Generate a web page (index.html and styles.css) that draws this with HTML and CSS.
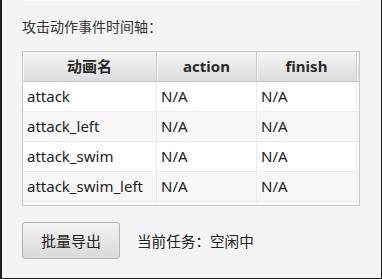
FILE: index.html
```html
<!DOCTYPE html>
<html lang="zh-CN">
<head>
    <meta charset="UTF-8">
    <title>攻击动作事件时间轴</title>
    <link rel="stylesheet" href="styles.css">
</head>
<body>
    <div class="frame">
        <div class="top-edge"></div>
        <div class="title">攻击动作事件时间轴：</div>

        <div class="grid">
            <div class="grid-head">
                <div class="cell">动画名</div>
                <div class="cell">action</div>
                <div class="cell">finish</div>
                <div class="cell filler"></div>
            </div>
            <div class="grid-body">
                <div class="row">
                    <div class="cell">attack</div>
                    <div class="cell">N/A</div>
                    <div class="cell">N/A</div>
                    <div class="cell filler"></div>
                </div>
                <div class="row">
                    <div class="cell">attack_left</div>
                    <div class="cell">N/A</div>
                    <div class="cell">N/A</div>
                    <div class="cell filler"></div>
                </div>
                <div class="row">
                    <div class="cell">attack_swim</div>
                    <div class="cell">N/A</div>
                    <div class="cell">N/A</div>
                    <div class="cell filler"></div>
                </div>
                <div class="row">
                    <div class="cell">attack_swim_left</div>
                    <div class="cell">N/A</div>
                    <div class="cell">N/A</div>
                    <div class="cell filler"></div>
                </div>
                <div class="row">
                    <div class="cell"></div>
                    <div class="cell"></div>
                    <div class="cell"></div>
                    <div class="cell filler"></div>
                </div>
            </div>
        </div>

        <div class="footer">
            <button class="export-btn">批量导出</button>
            <span class="status">当前任务：空闲中</span>
        </div>
    </div>
</body>
</html>
```

FILE: styles.css
```css
body {
    margin: 0;
    font-family: 'Noto Sans', 'Noto Sans CJK SC', sans-serif;
    color: #222;
}
.frame {
    width: 382px;
    height: 279px;
    box-sizing: border-box;
    background-color: #f4f4f4;
    border-left: 2px solid #1e1e1e;
    border-right: 1px solid #1e1e1e;
    border-bottom: 1px solid #1e1e1e;
    padding-left: 20px;
}
.top-edge {
    width: 338px;
    height: 1px;
    background-color: #fbfbfb;
}
.title {
    margin-top: 16px;
    height: 20px;
    line-height: 20px;
    font-size: 14px;
    color: #333;
}
.grid {
    margin-top: 14px;
    width: 338px;
    height: 155px;
    box-sizing: border-box;
    border: 1px solid #c8c8c8;
    background-color: #fff;
    overflow: hidden;
}
.grid-head,
.row {
    display: grid;
    grid-template-columns: 134px 100px 100px 2px;
}
.grid-head {
    height: 29px;
    background: linear-gradient(#f5f5f5, #dddddd);
    border-bottom: 1px solid #c4c4c4;
}
.grid-head .cell {
    font-weight: 700;
    font-size: 15px;
    line-height: 29px;
    text-align: center;
    color: #2a2a2a;
    border-right: 1px solid #cdcdcd;
    box-shadow: inset 1px 0 0 #f7f7f7;
}
.grid-head .filler {
    border-right: none;
}
.grid-body {
    height: 124px;
    overflow: hidden;
}
.row {
    height: 30px;
    box-sizing: border-box;
    border-bottom: 1px solid #ececec;
}
.row:nth-child(even) {
    background-color: #f8f8f8;
}
.row .cell {
    font-size: 15px;
    line-height: 29px;
    padding-left: 4px;
    border-right: 1px solid #ececec;
    white-space: nowrap;
}
.row .filler {
    padding-left: 0;
    border-right: none;
}
.footer {
    margin-top: 16px;
    display: flex;
    align-items: center;
    gap: 17px;
}
.export-btn {
    width: 98px;
    height: 37px;
    border: 1px solid #b4b4b4;
    border-radius: 3px;
    background: linear-gradient(#f3f3f3, #dadada);
    font-family: inherit;
    font-size: 15px;
    color: #222;
    padding: 0;
}
.status {
    font-size: 14.6px;
    color: #222;
}
```
